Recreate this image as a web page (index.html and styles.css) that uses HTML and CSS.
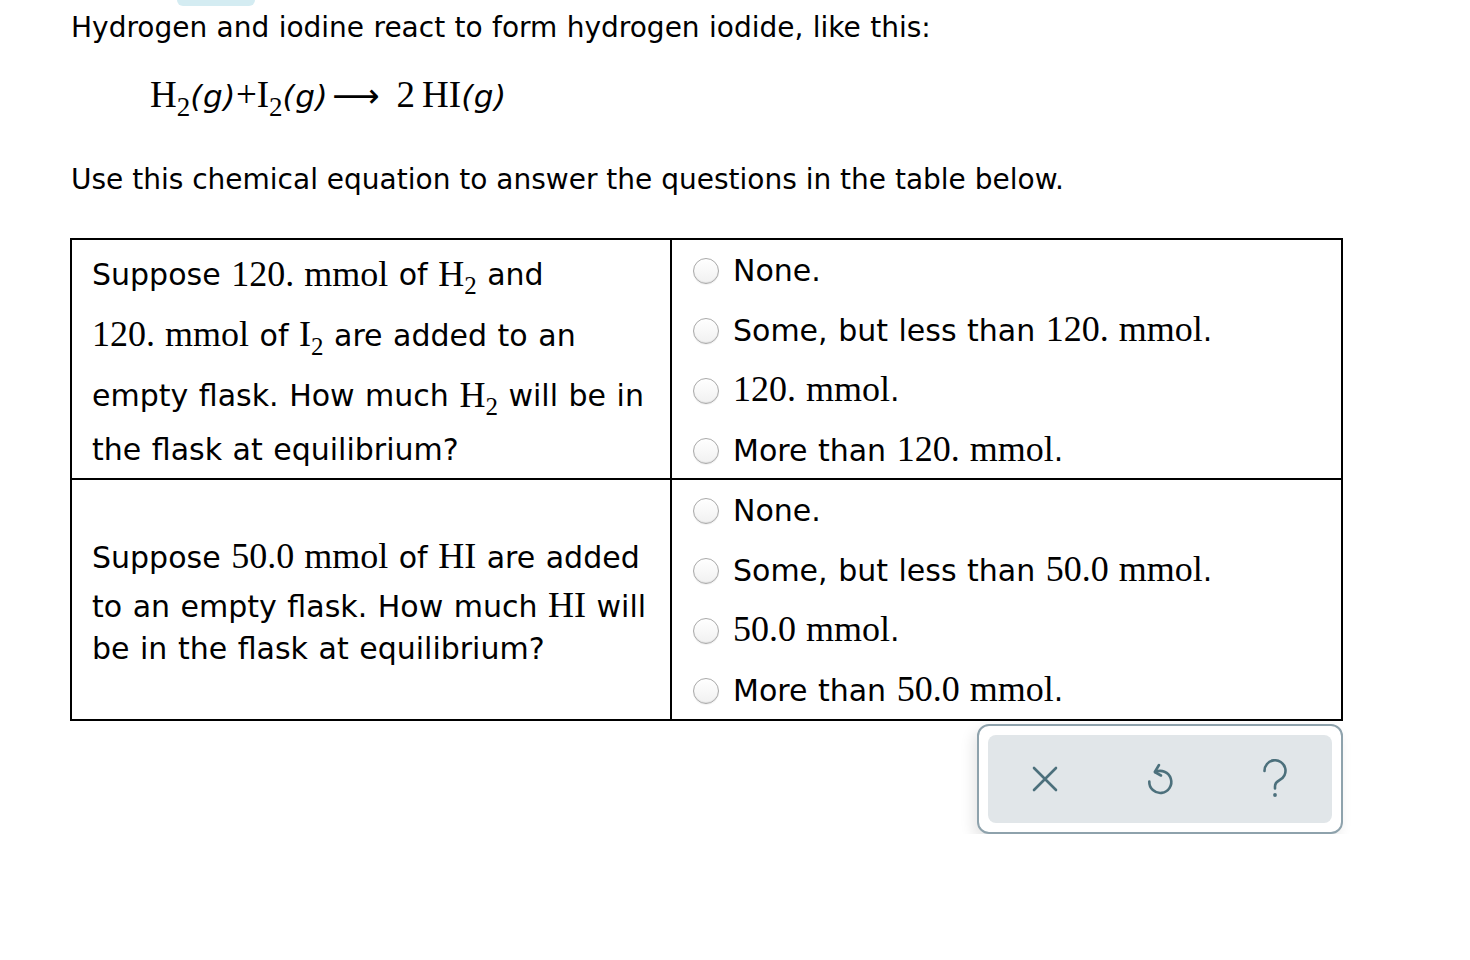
FILE: index.html
```html
<!DOCTYPE html>
<html lang="en">
<head>
<meta charset="utf-8">
<title>Hydrogen iodide equilibrium</title>
<link rel="stylesheet" href="styles.css">
</head>
<body>
<div class="page">
  <div class="tab"></div>
  <p class="intro first">Hydrogen and iodine react to form hydrogen iodide, like this:</p>
  <div class="equation"><span class="em">H</span><sub class="esub">2</sub><span class="eg">(g)</span><span class="em">+I</span><sub class="esub">2</sub><span class="eg">(g)</span><span class="arrow">⟶</span><span class="em two">2</span><span class="em">HI</span><span class="eg">(g)</span></div>
  <p class="intro second">Use this chemical equation to answer the questions in the table below.</p>

  <div class="qgrid">
    <div class="qcell">
      <div class="qtext">Suppose <span class="m">120. mmol</span> of <span class="m">H</span><sub>2</sub> and<br><span class="m">120. mmol</span> of <span class="m">I</span><sub>2</sub> are added to an<br>empty flask. How much <span class="m">H</span><sub>2</sub> will be in<br>the flask at equilibrium?</div>
    </div>
    <div class="ocell">
      <label class="opt"><span class="radio"></span><span class="otext">None.</span></label>
      <label class="opt"><span class="radio"></span><span class="otext">Some, but less than <span class="m">120. mmol</span>.</span></label>
      <label class="opt"><span class="radio"></span><span class="otext"><span class="m">120. mmol</span>.</span></label>
      <label class="opt"><span class="radio"></span><span class="otext">More than <span class="m">120. mmol</span>.</span></label>
    </div>
    <div class="qcell">
      <div class="qtext">Suppose <span class="m">50.0 mmol</span> of <span class="m">HI</span> are added<br>to an empty flask. How much <span class="m">HI</span> will<br>be in the flask at equilibrium?</div>
    </div>
    <div class="ocell">
      <label class="opt"><span class="radio"></span><span class="otext">None.</span></label>
      <label class="opt"><span class="radio"></span><span class="otext">Some, but less than <span class="m">50.0 mmol</span>.</span></label>
      <label class="opt"><span class="radio"></span><span class="otext"><span class="m">50.0 mmol</span>.</span></label>
      <label class="opt"><span class="radio"></span><span class="otext">More than <span class="m">50.0 mmol</span>.</span></label>
    </div>
  </div>

  <div class="actions-row">
    <div class="actions">
      <div class="actions-inner">
        <button class="act" type="button" aria-label="Clear">
          <svg width="32" height="32" viewBox="0 0 32 32"><path d="M5 5 L27 27 M27 5 L5 27" fill="none" stroke="currentColor" stroke-width="2.6" stroke-linecap="round"/></svg>
        </button>
        <button class="act" type="button" aria-label="Undo">
          <svg width="32" height="34" viewBox="0 0 32 34"><path d="M11.2 10.2 A11 11 0 1 1 5.3 19.5" fill="none" stroke="currentColor" stroke-width="2.6" stroke-linecap="round"/><path d="M15 3 L10.8 10 L17 13.5" fill="none" stroke="currentColor" stroke-width="2.6" stroke-linecap="round" stroke-linejoin="round"/></svg>
        </button>
        <button class="act" type="button" aria-label="Help">
          <svg width="32" height="40" viewBox="0 0 32 40"><path d="M5.5 12 A10.5 10.5 0 1 1 20 21.5 C17.2 23 16 24.6 16 27.5 V29.5" fill="none" stroke="currentColor" stroke-width="2.6" stroke-linecap="round"/><circle cx="16" cy="36" r="1.9" fill="currentColor"/></svg>
        </button>
      </div>
    </div>
  </div>
</div>
</body>
</html>
```

FILE: styles.css
```css
* {
  box-sizing: border-box;
}

html,
body {
  margin: 0;
  padding: 0;
  background: #ffffff;
}

body {
  font-family: "DejaVu Sans", Verdana, sans-serif;
  font-size: 28px;
  color: #000000;
}

.page {
  padding-left: 70px;
  width: 1343px;
}

.tab {
  width: 78px;
  height: 6px;
  margin-left: 107px;
  background: #d4ecf2;
  border-radius: 0 0 9px 9px;
}

.intro {
  margin: 0;
  line-height: 36px;
  padding-left: 1px;
}

.intro.first {
  margin-top: 4px;
  word-spacing: 0.5px;
}

.intro.second {
  margin-top: 45px;
}

.equation {
  padding-left: 80px;
  margin-top: 27px;
  line-height: 44px;
  height: 44px;
  white-space: nowrap;
}

.em {
  font-family: "Liberation Serif", "Times New Roman", serif;
  font-size: 37px;
}

.em.two {
  margin-left: 17px;
  margin-right: 7px;
}

.esub {
  font-family: "Liberation Serif", "Times New Roman", serif;
  font-size: 27px;
  vertical-align: -9px;
  line-height: 1;
}

.eg {
  font-family: "DejaVu Sans", Verdana, sans-serif;
  font-style: italic;
  font-size: 31px;
  letter-spacing: 0.6px;
}

.arrow {
  font-family: "DejaVu Sans", sans-serif;
  font-size: 33px;
  margin-left: 4px;
}

.qgrid {
  margin-top: 40px;
  display: grid;
  grid-template-columns: 598px 669px;
  grid-template-rows: 238px 239px;
  gap: 2px;
  padding: 2px;
  background: #000000;
  width: 1273px;
  font-size: 30px;
  word-spacing: 1px;
}

.qcell,
.ocell {
  background: #ffffff;
}

.qcell {
  display: flex;
  align-items: center;
  padding: 0 10px 0 20px;
}

.qtext {
  line-height: 40px;
  white-space: nowrap;
}

.m {
  font-family: "Liberation Serif", "Times New Roman", serif;
  font-size: 36px;
  line-height: 36px;
}

.qtext .m::before {
  content: "";
  display: inline-block;
  width: 0;
  height: 49px;
  vertical-align: -11.6px;
}

sub {
  font-family: "Liberation Serif", "Times New Roman", serif;
  font-size: 25px;
  line-height: 44px;
  vertical-align: -9px;
}

.ocell {
  display: flex;
  flex-direction: column;
  padding-left: 21px;
  padding-top: 1px;
}

.opt {
  display: flex;
  align-items: center;
  height: 60px;
  flex: none;
  white-space: nowrap;
}

.radio {
  flex: none;
  width: 26px;
  height: 26px;
  border-radius: 50%;
  border: 1px solid #a9a9a9;
  background: linear-gradient(#ffffff, #f1f1f1);
  box-shadow: inset 0 -1px 1px rgba(0, 0, 0, 0.08), 0 1px 1px rgba(0, 0, 0, 0.05);
  margin-right: 14px;
}

.otext {
  line-height: 40px;
}

.actions-row {
  display: flex;
  justify-content: flex-end;
  width: 1273px;
  margin-top: 3px;
}

.actions {
  width: 366px;
  height: 110px;
  border: 2px solid #8ea2ac;
  border-radius: 12px;
  background: #ffffff;
  padding: 9px;
  box-shadow: -4px 6px 14px rgba(0, 0, 0, 0.10);
}

.actions-inner {
  display: flex;
  height: 100%;
  background: #e1e6e9;
  border-radius: 8px;
}

.act {
  flex: 1;
  display: flex;
  align-items: center;
  justify-content: center;
  border: 0;
  background: transparent;
  padding: 0;
  color: #4c707c;
  cursor: pointer;
}

.act svg {
  display: block;
}
```
